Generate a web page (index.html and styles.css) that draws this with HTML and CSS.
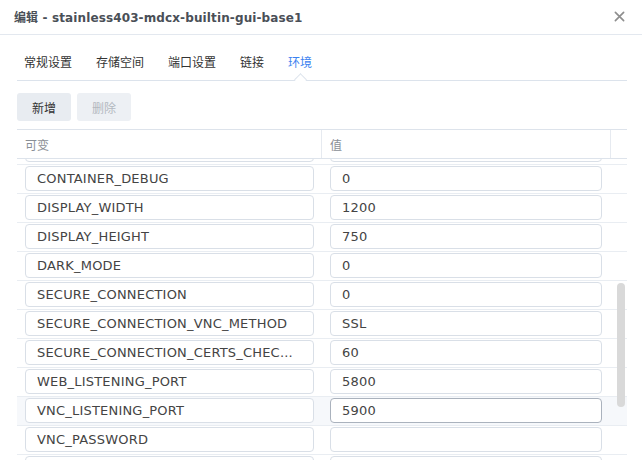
FILE: index.html
```html
<!DOCTYPE html>
<html lang="zh">
<head>
<meta charset="utf-8">
<title>编辑</title>
<link rel="stylesheet" href="styles.css">
</head>
<body>
<div class="dialog">
  <div class="titlebar">
    <span class="title">编辑 - stainless403-mdcx-builtin-gui-base1</span>
    <span class="close" aria-label="close">
      <svg width="12" height="12" viewBox="0 0 12 12"><path d="M1.5 1.5 L10.5 10.5 M10.5 1.5 L1.5 10.5" stroke="#8e8e8e" stroke-width="1.8" stroke-linecap="round" fill="none"/></svg>
    </span>
  </div>
  <div class="content">
    <div class="tabs">
      <span class="tab">常规设置</span>
      <span class="tab">存储空间</span>
      <span class="tab">端口设置</span>
      <span class="tab">链接</span>
      <span class="tab active">环境</span>
    </div>
    <div class="toolbar">
      <button class="btn">新增</button>
      <button class="btn disabled">删除</button>
    </div>
    <div class="grid">
      <div class="grid-head">
        <div class="th">可变</div>
        <div class="th">值</div>
        <div class="th gutter"></div>
      </div>
      <div class="grid-body">
        <div class="row scrolled"><div class="cell"><div class="input"></div></div><div class="cell"><div class="input"></div></div></div>
        <div class="row"><div class="cell"><div class="input">CONTAINER_DEBUG</div></div><div class="cell"><div class="input">0</div></div></div>
        <div class="row"><div class="cell"><div class="input">DISPLAY_WIDTH</div></div><div class="cell"><div class="input">1200</div></div></div>
        <div class="row"><div class="cell"><div class="input">DISPLAY_HEIGHT</div></div><div class="cell"><div class="input">750</div></div></div>
        <div class="row"><div class="cell"><div class="input">DARK_MODE</div></div><div class="cell"><div class="input">0</div></div></div>
        <div class="row"><div class="cell"><div class="input">SECURE_CONNECTION</div></div><div class="cell"><div class="input">0</div></div></div>
        <div class="row"><div class="cell"><div class="input">SECURE_CONNECTION_VNC_METHOD</div></div><div class="cell"><div class="input">SSL</div></div></div>
        <div class="row"><div class="cell"><div class="input">SECURE_CONNECTION_CERTS_CHEC...</div></div><div class="cell"><div class="input">60</div></div></div>
        <div class="row"><div class="cell"><div class="input">WEB_LISTENING_PORT</div></div><div class="cell"><div class="input">5800</div></div></div>
        <div class="row hover"><div class="cell"><div class="input">VNC_LISTENING_PORT</div></div><div class="cell"><div class="input focus">5900</div></div></div>
        <div class="row"><div class="cell"><div class="input">VNC_PASSWORD</div></div><div class="cell"><div class="input"></div></div></div>
        <div class="row"><div class="cell"><div class="input"></div></div><div class="cell"><div class="input"></div></div></div>
        <div class="thumb"></div>
      </div>
    </div>
  </div>
</div>
</body>
</html>
```

FILE: styles.css
```css
* { box-sizing: border-box; }
html, body { margin: 0; padding: 0; background: #ffffff; }
body {
  font-family: "DejaVu Sans", "Noto Sans CJK SC", sans-serif;
  color: #333333;
  width: 642px;
  height: 460px;
  overflow: hidden;
}
.dialog { width: 642px; }
.titlebar {
  height: 35px;
  border-bottom: 1px solid #e3e8ef;
  display: flex;
  align-items: center;
  justify-content: space-between;
  padding: 0 17px 2px 14px;
}
.title {
  font-size: 12px;
  font-weight: 700;
  letter-spacing: 0.12px;
  color: #4a4f57;
}
.close { display: flex; width: 11px; height: 11px; }
.close svg { width: 11px; height: 11px; }
.content { padding: 0 15px 0 17px; }
.tabs {
  position: relative;
  height: 46px;
  border-bottom: 1px solid #dce3ec;
  display: flex;
  align-items: flex-end;
  gap: 24px;
  padding: 0 0 10px 7px;
}
.tab {
  font-family: "Noto Sans CJK SC", sans-serif;
  font-size: 12px;
  line-height: 16px;
  color: #333333;
  position: relative;
}
.tab.active { color: #3b82f0; }
.tab.active::after {
  content: "";
  position: absolute;
  left: 50%;
  bottom: -14px;
  width: 8px;
  height: 8px;
  margin-left: -4px;
  background: #ffffff;
  border-left: 1px solid #dce3ec;
  border-top: 1px solid #dce3ec;
  transform: rotate(45deg);
}
.toolbar {
  display: flex;
  gap: 6px;
  margin-top: 12px;
}
.btn {
  width: 54px;
  height: 28px;
  border: none;
  border-radius: 3px;
  background: #e8ecf1;
  font-family: "Noto Sans CJK SC", sans-serif;
  font-size: 12px;
  color: #333333;
  padding: 0;
}
.btn.disabled { color: #b3b8bf; background: #edf0f4; }
.grid {
  margin-top: 8px;
  width: 610px;
}
.grid-head {
  display: grid;
  grid-template-columns: 305px 289px 16px;
  border-top: 1px solid #dde3eb;
  border-bottom: 1px solid #dde3eb;
  height: 30px;
}
.th {
  font-family: "Noto Sans CJK SC", sans-serif;
  font-size: 12px;
  color: #8a8f96;
  padding-left: 8px;
  display: flex;
  align-items: center;
  border-right: 1px solid #e6eaf0;
}
.th.gutter { border-right: none; }
.grid-body {
  position: relative;
  height: 310px;
  overflow: hidden;
}
.row {
  display: grid;
  grid-template-columns: 305px 289px 16px;
  padding: 1px 0 2px;
  border-bottom: 1px solid #e9edf2;
}
.row.scrolled { margin-top: -23px; }
.row.hover { background: #f6f8fb; }
.cell { padding: 0 8px; }
.cell:nth-child(2) { padding: 0 9px 0 8px; }
.input {
  height: 25px;
  border: 1px solid #d9dfe7;
  border-radius: 4px;
  background: #ffffff;
  font-size: 13px;
  letter-spacing: 0.2px;
  line-height: 23px;
  color: #444444;
  padding: 0 11px;
  white-space: nowrap;
  overflow: hidden;
}
.input.focus { border-color: #aab2bd; }
.thumb {
  position: absolute;
  right: 2px;
  top: 124px;
  width: 8px;
  height: 124px;
  border-radius: 4px;
  background: #d9d9d9;
}
```
